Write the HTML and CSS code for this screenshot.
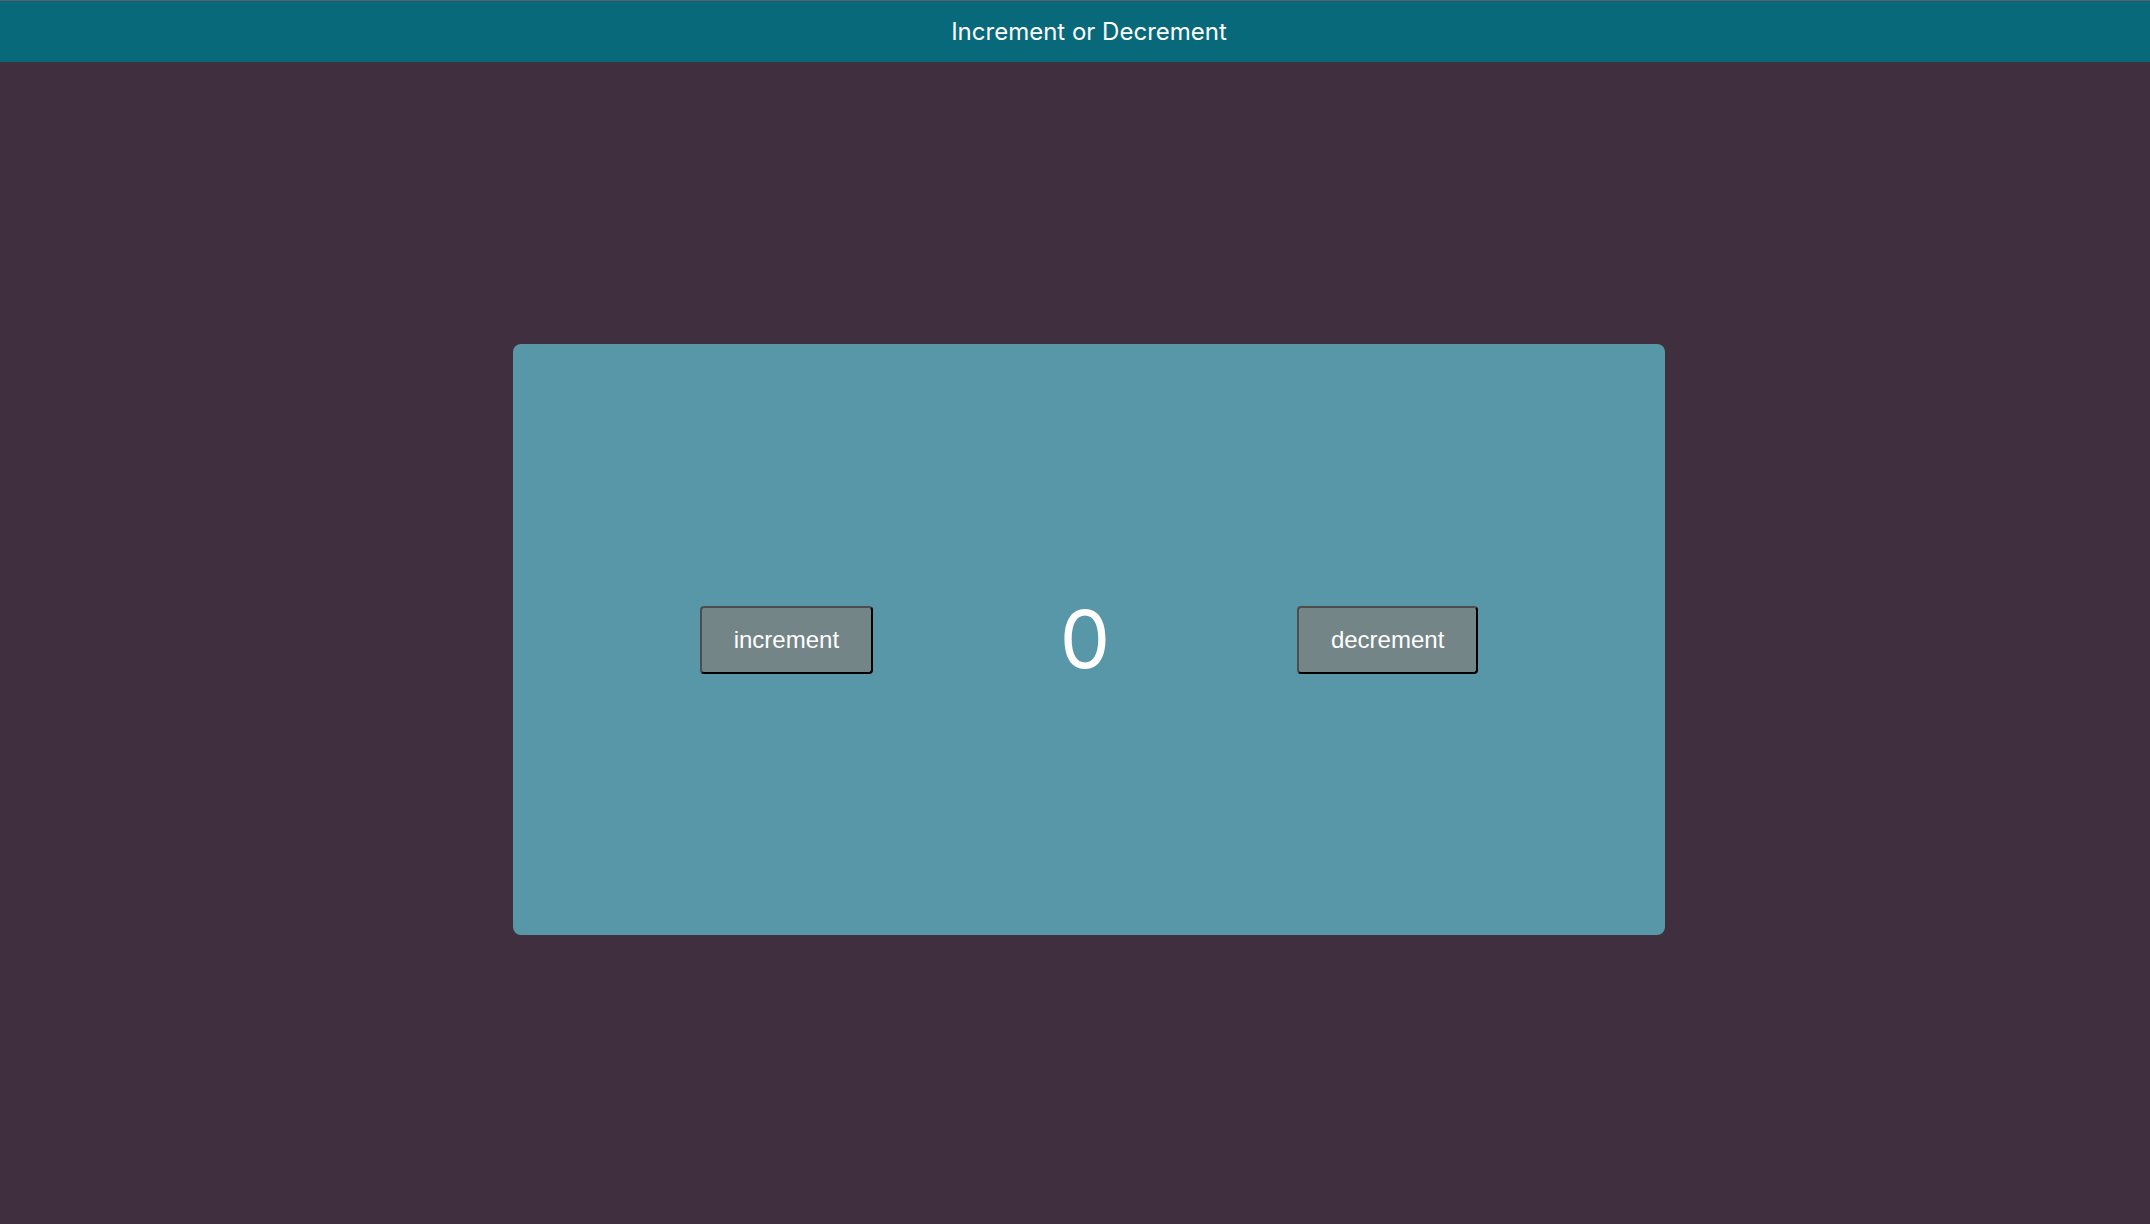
FILE: index.html
```html
<!DOCTYPE html>
<html lang="en">
<head>
<meta charset="utf-8">
<title>Increment or Decrement</title>
<link rel="stylesheet" href="styles.css">
</head>
<body>
<header class="topbar">
  <h1 class="topbar-title">Increment or Decrement</h1>
</header>
<main class="stage">
  <section class="counter-card">
    <button class="counter-btn" type="button">increment</button>
    <span class="counter-value">0</span>
    <button class="counter-btn" type="button">decrement</button>
  </section>
</main>
</body>
</html>
```

FILE: styles.css
```css
html, body {
  margin: 0;
  padding: 0;
  height: 100%;
}

body {
  background: #402f3f;
  font-family: Inter, "Noto Sans", sans-serif;
  display: flex;
  flex-direction: column;
}

.topbar {
  border-top: 1px solid #5e5c6c;
  background: #07697a;
  height: 61px;
  display: flex;
  align-items: center;
  justify-content: center;
  padding-left: 28px;
}

.topbar-title {
  margin: 0;
  font-size: 24px;
  font-weight: 400;
  color: #ffffff;
}

.stage {
  flex: 1;
  display: flex;
  align-items: center;
  justify-content: center;
  padding-left: 28px;
  padding-bottom: 8px;
}

.counter-card {
  width: 1152px;
  height: 591px;
  background: #5897a8;
  border-radius: 8px;
  display: flex;
  align-items: center;
  justify-content: space-evenly;
}

.counter-btn {
  font-family: "Liberation Sans", Arial, sans-serif;
  font-size: 24px;
  color: #ffffff;
  background: #748588;
  border: 2px solid #4d4d4d;
  border-right-color: #000;
  border-bottom-color: #000;
  border-radius: 4px;
  padding: 18px 32px;
  line-height: 28px;
  margin-top: 2px;
}

.counter-value {
  font-family: Inter, "Noto Sans", sans-serif;
  font-size: 80px;
  color: #ffffff;
  line-height: 1;
}
```
